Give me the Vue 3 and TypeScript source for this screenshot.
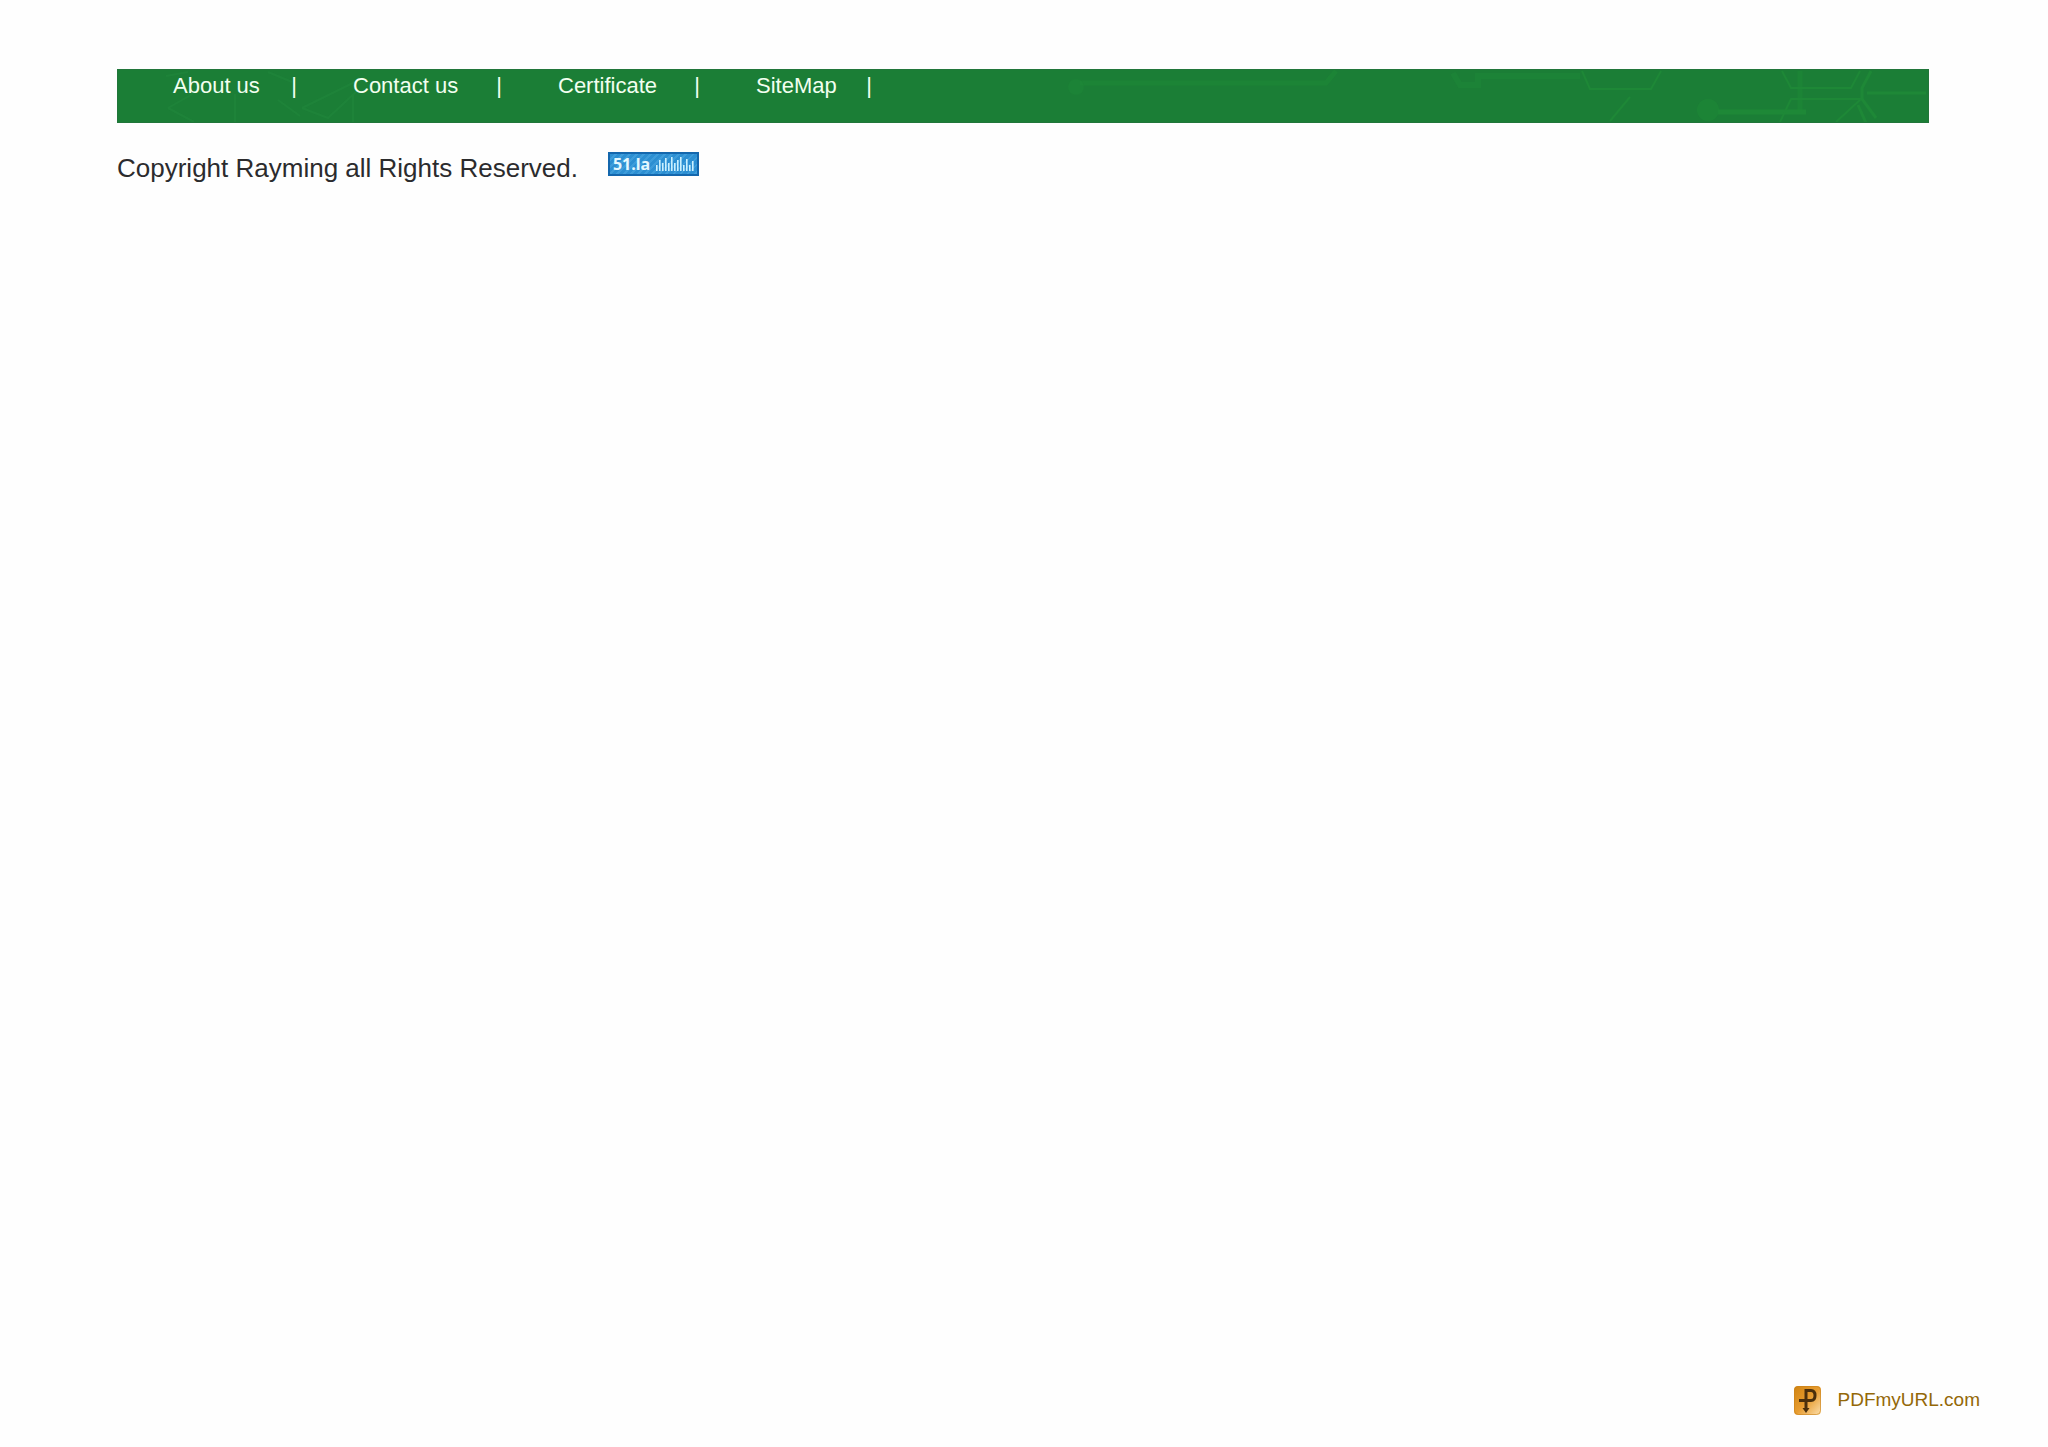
<script setup lang="ts">
interface NavLink {
  label: string
  href: string
}

const links: NavLink[] = [
  { label: 'About us', href: '#about' },
  { label: 'Contact us', href: '#contact' },
  { label: 'Certificate', href: '#certificate' },
  { label: 'SiteMap', href: '#sitemap' },
]

const bars: number[] = [6, 11, 8, 13, 8, 14, 8, 11, 14, 6, 12, 6, 10]
</script>

<template>
  <div class="page">
    <nav class="bar" aria-label="Footer">
      <svg class="circuit left" width="400" height="54" viewBox="0 0 400 54" aria-hidden="true">
        <g fill="none" stroke="#1f853b" stroke-width="2" opacity=".8">
          <path d="M48 6 L70 2 M50 38 L78 22 M50 38 L76 52 M117 24 V54 M150 2 L174 12 M160 30 L182 46 M184 38 L245 8 M184 38 L210 48 L240 20 M235 24 V54" />
        </g>
      </svg>
      <svg class="circuit right" width="880" height="54" viewBox="1048 69 880 54" aria-hidden="true">
        <g fill="none" stroke="#1e8837" stroke-width="3">
          <path d="M1080 82 H1326 L1336 70" stroke-width="5" opacity=".6" />
          <path d="M1453 72 L1460 84 H1478 V72 M1480 75 H1580" stroke-width="6" opacity=".5" />
          <path d="M1582 70 L1590 88 H1651 L1661 70 M1630 96 L1610 120" stroke-width="2" />
          <path d="M1718 111 H1806" stroke-width="5" />
          <path d="M1800 70 V110" stroke-width="5" opacity=".6" />
          <path d="M1782 70 L1791 87 H1851 L1860 70 M1780 121 L1791 98 H1861 L1836 121" stroke-width="2" />
          <path d="M1871 70 L1862 87 V98 L1876 117 M1858 104 L1866 122" />
          <path d="M1867 92 H1926" />
        </g>
        <g fill="#1e8837">
          <circle cx="1076" cy="86" r="8" opacity=".5" />
          <circle cx="1708" cy="109" r="11" opacity=".6" />
        </g>
      </svg>
      <ul class="links">
        <li v-for="link in links" :key="link.label">
          <a :href="link.href">{{ link.label }}</a>
          <span>|</span>
        </li>
      </ul>
    </nav>

    <main class="copyright">
      <p>Copyright Rayming all Rights Reserved.</p>
      <a class="stats" href="#stats">
        <span>51.la</span>
        <svg width="38" height="16" viewBox="0 0 38 16" aria-hidden="true">
          <rect v-for="(h, i) in bars" :key="i" :x="i * 3" :y="15 - h" width="1.6" :height="h" fill="#c9f0ff" />
        </svg>
      </a>
    </main>

    <footer class="credit">
      <a href="#pdfmyurl">
        <svg width="27" height="29" viewBox="0 0 27 29" aria-hidden="true">
          <defs>
            <linearGradient id="amber" x1="0" y1="0" x2="1" y2="1">
              <stop offset="0" stop-color="#d08310" />
              <stop offset=".5" stop-color="#e79c30" />
              <stop offset="1" stop-color="#fde0ae" />
            </linearGradient>
          </defs>
          <rect width="27" height="29" rx="4" fill="url(#amber)" />
          <rect x=".5" y=".5" width="26" height="28" rx="4" fill="none" stroke="#c9821b" opacity=".6" />
          <path d="M12 23 V4.500 H17 Q21 4.500 21 9.500 Q21 14.500 17 14.500 H5" fill="none" stroke="#4a2f0c" stroke-width="3" />
          <path d="M8.500 22 H15.500 L12 27 Z" fill="#4a2f0c" />
        </svg>
        <span>PDFmyURL.com</span>
      </a>
    </footer>
  </div>
</template>

<style>
body {
  margin: 0;
  background: #fefefe;
}
</style>

<style scoped>
.page {
  box-sizing: border-box;
  min-height: 100vh;
  display: flex;
  flex-direction: column;
  padding: 69px 119px 32px 117px;
  font-family: "Liberation Sans", Arial, sans-serif;
}

a {
  color: inherit;
  text-decoration: none;
}

.bar {
  position: relative;
  box-sizing: border-box;
  min-height: 54px;
  overflow: hidden;
  background: #1b7e36;
  border: 1px solid #21763a;
}

.circuit {
  position: absolute;
  top: 0;
}

.left {
  left: 0;
}

.right {
  right: 0;
}

.links {
  position: relative;
  display: grid;
  grid-template-columns: 180px 205px 198px 172px;
  margin: 0;
  padding: 3px 0 0 55px;
  list-style: none;
  color: #f2fff0;
  font-size: 22px;
  line-height: 26px;
}

.links li {
  display: flex;
  justify-content: space-between;
  padding-right: 56px;
}

.copyright {
  display: flex;
  align-items: flex-start;
  gap: 30px;
  margin-top: 29px;
}

.copyright p {
  margin: 0;
  color: #2b2b2d;
  font-size: 26px;
  line-height: 32px;
}

.stats {
  box-sizing: border-box;
  display: flex;
  align-items: center;
  justify-content: space-between;
  width: 91px;
  height: 24px;
  padding: 0 3px;
  border: 2px solid #1467ad;
  background: repeating-linear-gradient(135deg, #2c8fd2 0 3px, #3d9cda 3px 5px);
  color: #e4f8ff;
  font-family: "Noto Sans", sans-serif;
  font-size: 16px;
  font-weight: bold;
  line-height: 20px;
}

.credit {
  align-self: flex-end;
  margin-top: auto;
  margin-right: -51px;
  color: #946808;
  font-size: 19px;
  line-height: 30px;
}

.credit a {
  display: flex;
  align-items: center;
  gap: 16px;
}
</style>
